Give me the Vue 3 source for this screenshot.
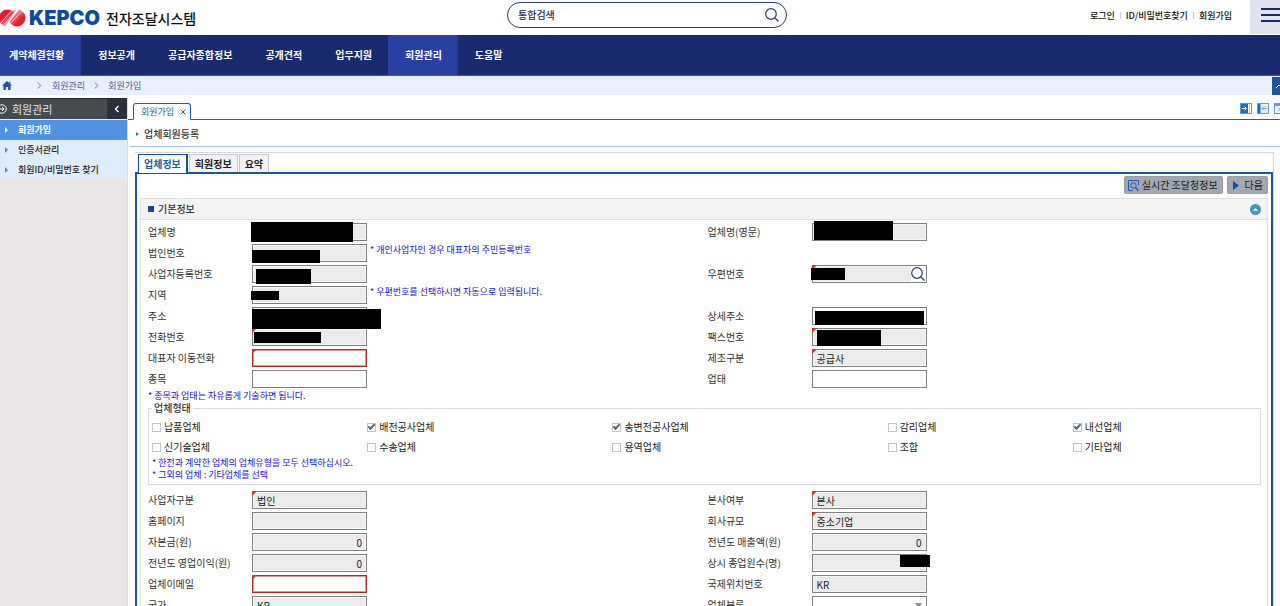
<script setup>
const navItems = [
  { text: '계약체결현황', on: true },
  { text: '정보공개' },
  { text: '공급자종합정보' },
  { text: '공개견적' },
  { text: '업무지원' },
  { text: '회원관리', on: true },
  { text: '도움말' },
]
const sideItems = ['회원가입', '인증서관리', '회원ID/비밀번호 찾기']
const tabs = ['업체정보', '회원정보', '요약']

// mask: [left, top, width, height] of the bar that hides a private value
const basic = [
  { id: 'name', label: '업체명', ro: true, mask: [-1, -1, 102, 20] },
  { id: 'nameEn', label: '업체명(영문)', ro: true, mask: [2, -2, 79, 19] },
  { id: 'corpNo', label: '법인번호', ro: true, mask: [0, 6, 68, 13], note: '* 개인사업자인 경우 대표자의 주민등록번호' },
  null,
  { id: 'bizNo', label: '사업자등록번호', ro: true, mask: [4, 4, 55, 15] },
  { id: 'zip', label: '우편번호', ro: true, req: true, search: true, mask: [-1, 3, 34, 12] },
  { id: 'region', label: '지역', ro: true, mask: [-1, 5, 28, 9], note: '* 우편번호를 선택하시면 자동으로 입력됩니다.' },
  null,
  { id: 'addr', label: '주소', ro: true, mask: [0, 2, 129, 20] },
  { id: 'addr2', label: '상세주소', mask: [3, 4, 109, 14] },
  { id: 'tel', label: '전화번호', ro: true, req: true, mask: [2, 4, 67, 11] },
  { id: 'fax', label: '팩스번호', ro: true, req: true, mask: [5, 2, 64, 16] },
  { id: 'mobile', label: '대표자 이동전화', req: true, empty: true },
  { id: 'maker', label: '제조구분', ro: true, req: true, value: '공급사' },
  { id: 'item', label: '종목' },
  { id: 'kind', label: '업태' },
]
const extra = [
  { id: 'bizType', label: '사업자구분', ro: true, req: true, value: '법인' },
  { id: 'head', label: '본사여부', ro: true, req: true, value: '본사' },
  { id: 'home', label: '홈페이지', ro: true },
  { id: 'size', label: '회사규모', ro: true, req: true, value: '중소기업' },
  { id: 'capital', label: '자본금(원)', ro: true, value: '0', num: true },
  { id: 'sales', label: '전년도 매출액(원)', ro: true, value: '0', num: true },
  { id: 'profit', label: '전년도 영업이익(원)', ro: true, value: '0', num: true },
  { id: 'staff', label: '상시 종업원수(명)', ro: true, mask: [88, 1, 30, 12] },
  { id: 'email', label: '업체이메일', req: true, empty: true },
  { id: 'gln', label: '국제위치번호', ro: true, value: 'KR' },
  { id: 'nation', label: '국가', ro: true, value: 'KR' },
  { id: 'class', label: '업체분류', select: true },
]
const groups = [basic, extra]
const kinds = [
  { text: '납품업체' },
  { text: '배전공사업체', on: true },
  { text: '송변전공사업체', on: true },
  { text: '감리업체' },
  { text: '내선업체', on: true },
  { text: '신기술업체' },
  { text: '수송업체' },
  { text: '용역업체' },
  { text: '조합' },
  { text: '기타업체' },
]
const maskStyle = (m) => ({
  left: m[0] + 'px',
  top: m[1] + 'px',
  width: m[2] + 'px',
  height: m[3] + 'px',
})
</script>

<template>
  <div class="page">
    <header class="top">
      <a class="brand" href="#">
        <svg class="emblem" width="26" height="18" viewBox="0 0 26 18" aria-hidden="true">
          <defs>
            <clipPath id="discL"><circle cx="7.5" cy="9" r="8.5" /></clipPath>
            <clipPath id="discR"><circle cx="17" cy="9" r="8.5" /></clipPath>
            <linearGradient id="fadeL" x1="0" y1="0" x2="1" y2="1">
              <stop offset=".35" stop-color="#e51f2b" /><stop offset="1" stop-color="#fbdcdc" />
            </linearGradient>
            <linearGradient id="fadeR" x1="0" y1="0" x2="1" y2="1">
              <stop offset="0" stop-color="#fbdcdc" /><stop offset=".65" stop-color="#e51f2b" />
            </linearGradient>
          </defs>
          <g clip-path="url(#discR)">
            <rect x="8" width="18" height="18" fill="url(#fadeR)" />
            <path d="M6 15 21-1M9 16 23 1" stroke="#fff" stroke-width=".7" />
          </g>
          <g clip-path="url(#discL)">
            <path d="M-2 0H18L5 18H-2z" fill="url(#fadeL)" />
            <path d="M0 15 14-1M2 18 17 1" stroke="#fff" stroke-width=".7" />
          </g>
          <path d="M5 18.5 18-.5" stroke="#fff" stroke-width="1.5" />
        </svg>
        <span class="kepco">KEPCO</span>
        <span class="system">전자조달시스템</span>
      </a>
      <form class="search" @submit.prevent>
        <input type="text" placeholder="통합검색" aria-label="통합검색" />
        <button type="submit" aria-label="검색">
          <svg width="14" height="14" viewBox="0 0 14 14"><circle cx="6" cy="6" r="5.3" /><path d="m10 10 3.5 3.5" /></svg>
        </button>
      </form>
      <nav class="util">
        <a href="#">로그인</a><a href="#">ID/비밀번호찾기</a><a href="#">회원가입</a>
      </nav>
      <button class="burger" aria-label="전체메뉴"><i></i><i></i><i></i></button>
    </header>

    <nav class="gnb">
      <a v-for="n in navItems" :key="n.text" href="#" :class="{ on: n.on }">{{ n.text }}</a>
    </nav>

    <div class="crumbs">
      <a class="home" href="#" aria-label="홈">
        <svg width="10" height="9" viewBox="0 0 10 9"><path d="M5 0 0 4.6h1.4V9h2.5V6h2.2v3h2.5V4.6H10L8.3 3V.8H7.1v1.1z" fill="#24539a" /></svg>
      </a>
      <svg class="sep" width="5" height="7" viewBox="0 0 5 7"><path d="m.8.5 3 3-3 3" /></svg>
      <a href="#">회원관리</a>
      <svg class="sep" width="5" height="7" viewBox="0 0 5 7"><path d="m.8.5 3 3-3 3" /></svg>
      <a href="#">회원가입</a>
      <button class="fold" aria-label="접기">
        <svg width="8" height="6" viewBox="0 0 8 6"><path d="m4 5 3-3 3 3" /></svg>
      </button>
    </div>

    <div class="body">
      <aside class="side">
        <div class="side-head">
          <svg class="go" width="10" height="10" viewBox="0 0 10 10"><circle cx="2" cy="5" r="4.2" /><path d="M-1 5h5M2 3l2 2-2 2" /></svg>
          <h2>회원관리</h2>
          <button aria-label="메뉴 닫기"><svg width="6" height="8" viewBox="0 0 6 8"><path d="M4.5 1 1.5 4l3 3" /></svg></button>
        </div>
        <ul>
          <li v-for="(s, i) in sideItems" :key="s"><a href="#" :class="{ on: i === 0 }">{{ s }}</a></li>
        </ul>
      </aside>

      <main class="main">
        <div class="docs">
          <div class="doc">
            <span>회원가입</span>
            <button aria-label="탭 닫기"><svg width="6" height="6" viewBox="0 0 6 6"><path d="m.5.5 5 5m0-5-5 5" /></svg></button>
          </div>
          <div class="tools">
            <button aria-label="다음 창">
              <svg width="12" height="11" viewBox="0 0 12 11"><rect x=".5" y=".5" width="11" height="10" fill="#fff" stroke="#5b9be2" /><path d="M1 1h7v9H1z" fill="#0d6edb" /><path d="M2 5.5h4M4.5 3.5l2 2-2 2" stroke="#fff" fill="none" /><path d="M9.5 1v9" stroke="#b9cfe8" /></svg>
            </button>
            <button aria-label="이전 창">
              <svg width="12" height="11" viewBox="0 0 12 11"><rect x=".5" y=".5" width="11" height="10" fill="#e8edf3" stroke="#5b9be2" /><path d="M1 1h2.5v9H1z" fill="#0d6edb" /><path d="M5 5.5h5M7 3.5l-2 2 2 2" stroke="#8f9cab" fill="none" /></svg>
            </button>
            <button aria-label="모두 닫기">
              <svg width="12" height="11" viewBox="0 0 12 11"><rect x=".5" y=".5" width="11" height="10" fill="#fff" stroke="#5b9be2" /><path d="M1 1h10v2H1z" fill="#5b9be2" /><path d="m4 4.5 4 4m0-4-4 4" stroke="#8f9cab" /></svg>
            </button>
          </div>
        </div>
        <h1 class="title">업체회원등록</h1>

        <div class="sheet">
          <div class="tabs" role="tablist">
            <button v-for="(t, i) in tabs" :key="t" role="tab" :aria-selected="i === 0" :class="{ on: i === 0 }">{{ t }}</button>
          </div>
          <div class="panel">
            <div class="actions">
              <button>
                <svg width="11" height="11" viewBox="0 0 11 11" fill="none" stroke="#1c5bb0"><path d="M10.5 5V.5H.5v10H5" /><circle cx="5.5" cy="5.5" r="2.7" /><path d="m7.5 7.5 3 3" stroke-width="1.5" /></svg>
                실시간 조달청정보
              </button>
              <button>
                <svg class="play" width="6" height="9" viewBox="0 0 6 9"><path d="M0 0 6 4.5 0 9z" fill="#0b50b4" /></svg>
                다음
              </button>
            </div>

            <section class="box">
              <div class="box-head">
                <h3>기본정보</h3>
                <button aria-label="접기"><svg width="11" height="11" viewBox="0 0 11 11"><circle cx="5.5" cy="5.5" r="5.5" fill="#4b93bf" /><path d="M2.8 6.8 5.5 4l2.7 2.8z" fill="#fff" /></svg></button>
              </div>
              <div class="content">
                <template v-for="(g, gi) in groups" :key="gi">
                  <div class="fields">
                    <div v-for="(f, i) in g" :key="i" class="field">
                      <template v-if="f">
                        <label :for="f.id">{{ f.label }}</label>
                        <div class="ctl" :class="{ req: f.req }">
                          <select v-if="f.select" :id="f.id"><option></option></select>
                          <input v-else :id="f.id" type="text" :value="f.value" :readonly="f.ro" :class="{ ro: f.ro, bad: f.empty, num: f.num }" />
                          <svg v-if="f.select" class="caret" width="7" height="5" viewBox="0 0 7 5"><path d="M0 0h7L3.5 5z" fill="#8093a8" /></svg>
                          <button v-if="f.search" class="find" aria-label="우편번호 찾기">
                            <svg width="14" height="14" viewBox="0 0 14 14"><circle cx="6" cy="6" r="5.3" /><path d="m10 10 3.5 3.5" /></svg>
                          </button>
                          <span v-if="f.mask" class="mask" :style="maskStyle(f.mask)"></span>
                        </div>
                        <span v-if="f.note" class="note">{{ f.note }}</span>
                      </template>
                    </div>
                  </div>
                  <template v-if="gi === 0">
                    <p class="note hint">* 종목과 업태는 자유롭게 기술하면 됩니다.</p>
                    <fieldset class="kinds">
                      <legend>업체형태</legend>
                      <div class="checks">
                        <label v-for="k in kinds" :key="k.text"><input type="checkbox" :checked="k.on" />{{ k.text }}</label>
                      </div>
                      <p class="note">* 한전과 계약한 업체의 업체유형을 모두 선택하십시오.</p>
                      <p class="note">* 그외의 업체 : 기타업체를 선택</p>
                    </fieldset>
                  </template>
                </template>
              </div>
            </section>
          </div>
        </div>
      </main>
    </div>
  </div>
</template>

<style>
body {
  margin: 0;
  overflow: hidden;
}
</style>

<style scoped>
.page {
  display: flex;
  flex-direction: column;
  height: 100vh;
  overflow: hidden;
  background: #fff;
  color: #333;
  font: 10px/14px "Noto Sans CJK KR", sans-serif;
}
.page *, .page *::before { box-sizing: border-box; }
a { color: inherit; text-decoration: none; }
button, input, select { margin: 0; padding: 0; border: 0; font: inherit; color: inherit; background: none; }
button { display: flex; align-items: center; justify-content: center; }
h1, h2, h3, p, ul { margin: 0; padding: 0; font: inherit; list-style: none; }
svg { display: block; flex: none; }

.top {
  flex: none;
  display: grid;
  grid-template-columns: 1fr 280px 463px 30px;
  align-items: center;
  height: 35px;
}
.brand { display: flex; align-items: center; height: 28px; }
.kepco { margin-left: 3px; width: 70px; font: 900 20px/28px Inter, sans-serif; color: #0b4a9e; }
.system { margin-left: 7px; font-size: 14px; line-height: 28px; font-weight: 500; color: #111; }
.search {
  display: flex;
  align-items: center;
  height: 26px;
  margin-bottom: 5px;
  padding: 0 7px 0 10px;
  border: 1px solid #2b3c78;
  border-radius: 13px;
}
.search input { flex: 1; min-width: 0; outline: 0; font-weight: 500; }
.search input::placeholder { color: #1b2c5c; opacity: 1; }
.search svg, .find svg { fill: none; stroke: #2b3c78; stroke-width: 1.2; }
.util { display: flex; justify-content: flex-end; margin: 0 18px 4px 0; color: #111; font-size: 9px; font-weight: 500; }
.util a + a { display: flex; align-items: center; }
.util a + a::before { content: ""; width: 1px; height: 7px; margin: 0 5px; background: #ccc; }
.burger {
  flex-direction: column;
  align-items: flex-end;
  gap: 4px;
  align-self: start;
  height: 34px;
  padding-bottom: 4px;
  background: #e1e3f0;
}
.burger i { width: 19px; height: 2px; background: #172a6e; }

.gnb {
  flex: none;
  display: flex;
  height: 41px;
  background: #182b6f;
  border-bottom: 1px solid #4a568c;
  color: #fff;
  font-weight: 700;
  line-height: 39px;
}
.gnb a { padding: 0 16px 0 17px; }
.gnb a:first-child { padding: 0 17px 0 9px; }
.gnb a.on { background: #2840a2; }

.crumbs {
  flex: none;
  display: flex;
  align-items: center;
  height: 19px;
  padding-left: 2px;
  background: #e8f0fd;
  color: #3b6394;
  font-size: 9px;
}
.home { margin-right: 25px; }
.sep { margin-right: 10px; fill: none; stroke: #5a7da8; }
.sep ~ .sep { margin: 0 9px; }
.fold { width: 8px; height: 18px; margin-left: auto; background: #24539a; }
.fold svg { fill: none; stroke: #fff; }

.body { flex: 1; min-height: 0; display: flex; }
.side { flex: none; width: 128px; margin-top: 3px; background: #ebe6e6; border-right: 1px solid #dcdcdc; }
.side-head { display: flex; align-items: center; height: 21px; background: #454b50; color: #e8e8e8; border-top: 1px solid #22272c; }
.side-head h2 { flex: 1; margin-left: 2px; font-size: 11px; }
.side-head button { width: 20px; height: 20px; background: #2a2f3a; }
.side-head svg { fill: none; stroke: #fff; stroke-width: 1.4; }
.side-head .go { stroke-width: 1; }
.side li a {
  display: flex;
  align-items: center;
  height: 20px;
  padding-left: 5px;
  background: #dfedfb;
  color: #222;
  font-size: 9px;
  font-weight: 500;
}
.side li a::before {
  content: "";
  width: 0;
  margin-right: 10px;
  border: 3px solid transparent;
  border-left: 3px solid #4a90dc;
  border-right: 0;
}
.side li a.on { height: 21px; background: #5192e4; border-top: 1px solid #dfedfb; color: #fff; font-weight: 700; }
.side li a.on::before { border-left-color: #fff; }

.main { flex: 1; min-width: 0; display: flex; flex-direction: column; }
.docs {
  flex: none;
  display: flex;
  align-items: flex-end;
  height: 25px;
  padding-left: 5px;
  border-bottom: 1px solid #1863b5;
}
.doc {
  display: flex;
  align-items: center;
  gap: 6px;
  height: 17px;
  margin-bottom: -1px;
  padding: 0 4px 0 7px;
  border: 1px solid #1863b5;
  border-bottom-color: #fff;
  border-radius: 3px 3px 0 0;
  background: #fff;
  color: #1f5ea8;
  font-size: 9px;
}
.doc svg { fill: none; stroke: #1f5ea8; }
.tools { display: flex; gap: 5px; margin: 0 -6px 5px auto; }
.title {
  flex: none;
  display: flex;
  align-items: center;
  height: 27px;
  margin-left: 2px;
  padding: 2px 0 0 6px;
  border-bottom: 1px solid #a4c6f0;
  font-weight: 500;
}
.title::before {
  content: "";
  margin-right: 5px;
  border: 2px solid transparent;
  border-left: 3px solid #2477c9;
  border-right: 0;
}
.sheet {
  flex: 1;
  min-height: 0;
  display: flex;
  flex-direction: column;
  margin: 5px 6px 0 7px;
  border: 1px solid #d5d8dc;
  border-width: 1px 1px 0 0;
}
.tabs { flex: none; display: flex; align-items: flex-end; gap: 1px; height: 20px; padding-left: 3px; margin-bottom: -1px; z-index: 1; }
.tabs button {
  height: 18px;
  margin-bottom: 1px;
  padding: 0 5px;
  border: 1px solid #c9c9c9;
  border-bottom: 0;
  background: #f2f2f2;
  color: #222;
  font-weight: 700;
}
.tabs button.on { height: 19px; margin-bottom: 0; padding: 0 5px; border: 2px solid #0f4f9f; border-width: 1px 2px 0 1px; background: #fff; color: #1b5ea8; }
.panel { flex: 1; min-height: 0; border: 2px solid #1558a8; border-width: 2px 2px 0; padding: 2px 3px 0; overflow: hidden; }
.actions { display: flex; justify-content: flex-end; gap: 4px; }
.actions button { gap: 3px; height: 18px; padding: 0 4px 0 3px; border: 1px solid #979ca5; border-radius: 2px; background: #a2a7b0; color: #1c1c1c; }
.actions .play { margin: 0 3px 0 2px; }

.box { margin-top: 4px; border: 1px solid #dedede; }
.box-head { display: flex; align-items: center; justify-content: space-between; height: 21px; padding: 0 6px 0 7px; background: #f4f4f4; border-bottom: 1px solid #dedede; }
.box-head h3 { display: flex; align-items: center; font-weight: 500; }
.box-head h3::before { content: ""; width: 6px; height: 6px; margin-right: 4px; background: #1e4590; }
.content { padding: 1px 0 0 7px; }
.fields { display: grid; grid-template-columns: 1fr 1fr; grid-auto-rows: 21px; }
.field { display: flex; align-items: center; }
.field > label { width: 104px; white-space: nowrap; }
.ctl { position: relative; flex: none; width: 115px; height: 18px; }
.ctl input, .ctl select {
  display: block;
  width: 100%;
  height: 18px;
  padding: 1px 4px 0;
  border: 1px solid #808080;
  border-radius: 0;
  background: #fff;
  color: #222;
  outline: 0;
  appearance: none;
}
.ctl input.ro { background: #ebebeb; box-shadow: inset 0 0 0 1px #f6f6f6; }
.ctl input.num { text-align: right; }
.ctl input.bad { border-color: #ad2a1c; box-shadow: inset 0 0 0 1px #dc9a92; }
.ctl.req::after {
  content: "";
  position: absolute;
  left: 0;
  top: 0;
  border-top: 5px solid #c43a28;
  border-right: 5px solid transparent;
}
.mask { position: absolute; z-index: 2; background: #000; }
.find { position: absolute; right: 1px; top: 1px; width: 15px; height: 16px; background: #fff; }
.caret { position: absolute; right: 5px; top: 7px; }
.note { color: #1414d8; font-size: 9px; line-height: 12px; white-space: nowrap; }
.field .note { margin: 0 0 5px 3px; }
.hint { height: 13px; line-height: 14px; }
.kinds { min-width: 0; margin: 0 6px 4px 0; padding: 0 3px 3px; border: 1px solid #d9d9d9; }
.kinds legend { height: 12px; padding: 0 2px; line-height: 12px; font-weight: 500; }
.checks { display: grid; grid-template-columns: 215fr 245fr 275fr 185fr 184fr; grid-auto-rows: 20px; margin-top: 3px; }
.checks label { display: flex; align-items: center; gap: 3px; color: #222; }
.checks input {
  display: grid;
  place-items: center;
  width: 9px;
  height: 9px;
  border: 1px solid #bcc8d0;
  background: #fff;
  appearance: none;
}
.checks input:checked::before {
  content: "";
  width: 7px;
  height: 4px;
  margin-bottom: 2px;
  border: solid #5d6870;
  border-width: 0 0 2px 2px;
  transform: rotate(-45deg);
}
</style>
